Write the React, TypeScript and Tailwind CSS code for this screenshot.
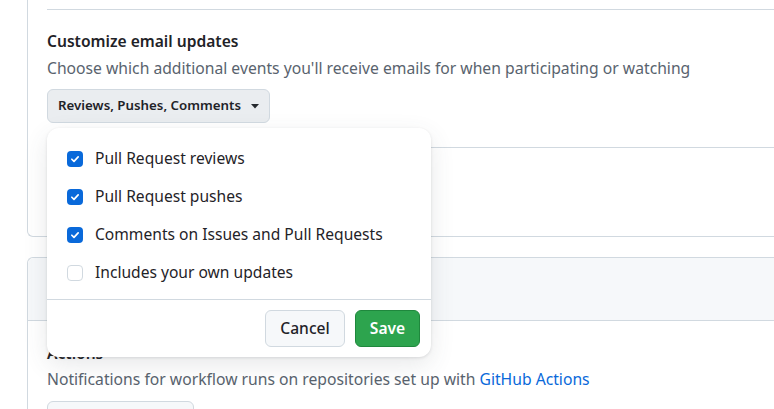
import React from 'react';

const font = { fontFamily: '"Noto Sans", "Segoe UI", Arial, sans-serif' };

const options = [
  { label: 'Pull Request reviews', checked: true },
  { label: 'Pull Request pushes', checked: true },
  { label: 'Comments on Issues and Pull Requests', checked: true },
  { label: 'Includes your own updates', checked: false },
];

const Check: React.FC<{ checked: boolean }> = ({ checked }) =>
  checked ? (
    <span className="flex h-4 w-4 items-center justify-center rounded-[4px] bg-[#0969da]">
      <svg width="10" height="10" viewBox="0 0 12 12" fill="none">
        <path d="M2.2 6.3 4.8 8.9 9.8 3.4" stroke="white" strokeWidth="2" strokeLinecap="round" strokeLinejoin="round" />
      </svg>
    </span>
  ) : (
    <span className="h-4 w-4 rounded-[4px] border border-[#d1d9e0] bg-white" />
  );

const App: React.FC = () => {
  return (
    <div className="relative h-[409px] w-[774px] overflow-hidden bg-white text-[#1f2328]" style={font}>
      <div className="pl-[27px]">
        {/* Email card */}
        <div className="w-[780px] rounded-bl-md border-b border-l border-[#d1d9e0]">
          <div className="h-[9px]" />
          <div className="ml-[19px] border-t border-[#d1d9e0] pb-6 pt-[21px]">
            <h3 className="text-[15.6px] font-semibold leading-5">Customize email updates</h3>
            <p className="mt-[5px] text-[15.7px] leading-6 text-[#59636e]">
              Choose which additional events you'll receive emails for when participating or watching
            </p>
            <button className="mt-[9px] flex h-[34px] items-center gap-[10px] rounded-md border border-[#d1d9e0] bg-[#eaedf0] pl-[10px] pr-[10px] text-[13.3px] font-semibold">
              Reviews, Pushes, Comments
              <svg width="8" height="5" viewBox="0 0 8 5">
                <path d="M0 0h8L4 4.5z" fill="#25292e" />
              </svg>
            </button>
          </div>
          <div className="ml-[19px] h-[89px] border-t border-[#d1d9e0]" />
        </div>

        {/* Actions card */}
        <div className="mt-5 w-[780px] rounded-tl-md border-l border-t border-[#d1d9e0]">
          <div className="h-[63px] rounded-tl-md border-b border-[#d1d9e0] bg-[#f6f8fa]" />
          <div className="px-[19px] pt-[22px]">
            <h3 className="text-[15.6px] font-semibold leading-5">Actions</h3>
            <p className="mt-[4px] text-[15.7px] leading-6 text-[#59636e]">
              Notifications for workflow runs on repositories set up with{' '}
              <a className="text-[#0969da]">GitHub Actions</a>
            </p>
            <div className="mt-[10px] h-[34px] w-[147px] rounded-md border border-[#d1d9e0] bg-[#f6f8fa]" />
          </div>
        </div>
      </div>

      {/* Popover */}
      <div className="absolute left-[47px] top-[128px] w-[384px] rounded-xl bg-white shadow-[0_1px_3px_rgba(31,35,40,0.12),0_8px_24px_rgba(66,74,83,0.12)]">
        <div className="pt-[12px] pb-[7px]">
          {options.map((o) => (
            <label key={o.label} className="flex h-[38px] items-center gap-3 pl-5 text-[15.6px]">
              <Check checked={o.checked} />
              {o.label}
            </label>
          ))}
        </div>
        <div className="flex justify-end gap-[10px] border-t border-[#d1d9e0] px-[11px] py-[10px]">
          <button className="h-[37px] w-[80px] rounded-md border border-[#d1d9e0] bg-[#f6f8fa] text-[15.6px] font-medium">
            Cancel
          </button>
          <button className="h-[37px] w-[65px] rounded-md border border-[#1f883d] bg-[#2da44e] text-[15.6px] font-semibold text-white">
            Save
          </button>
        </div>
      </div>
    </div>
  );
};

export default App;
